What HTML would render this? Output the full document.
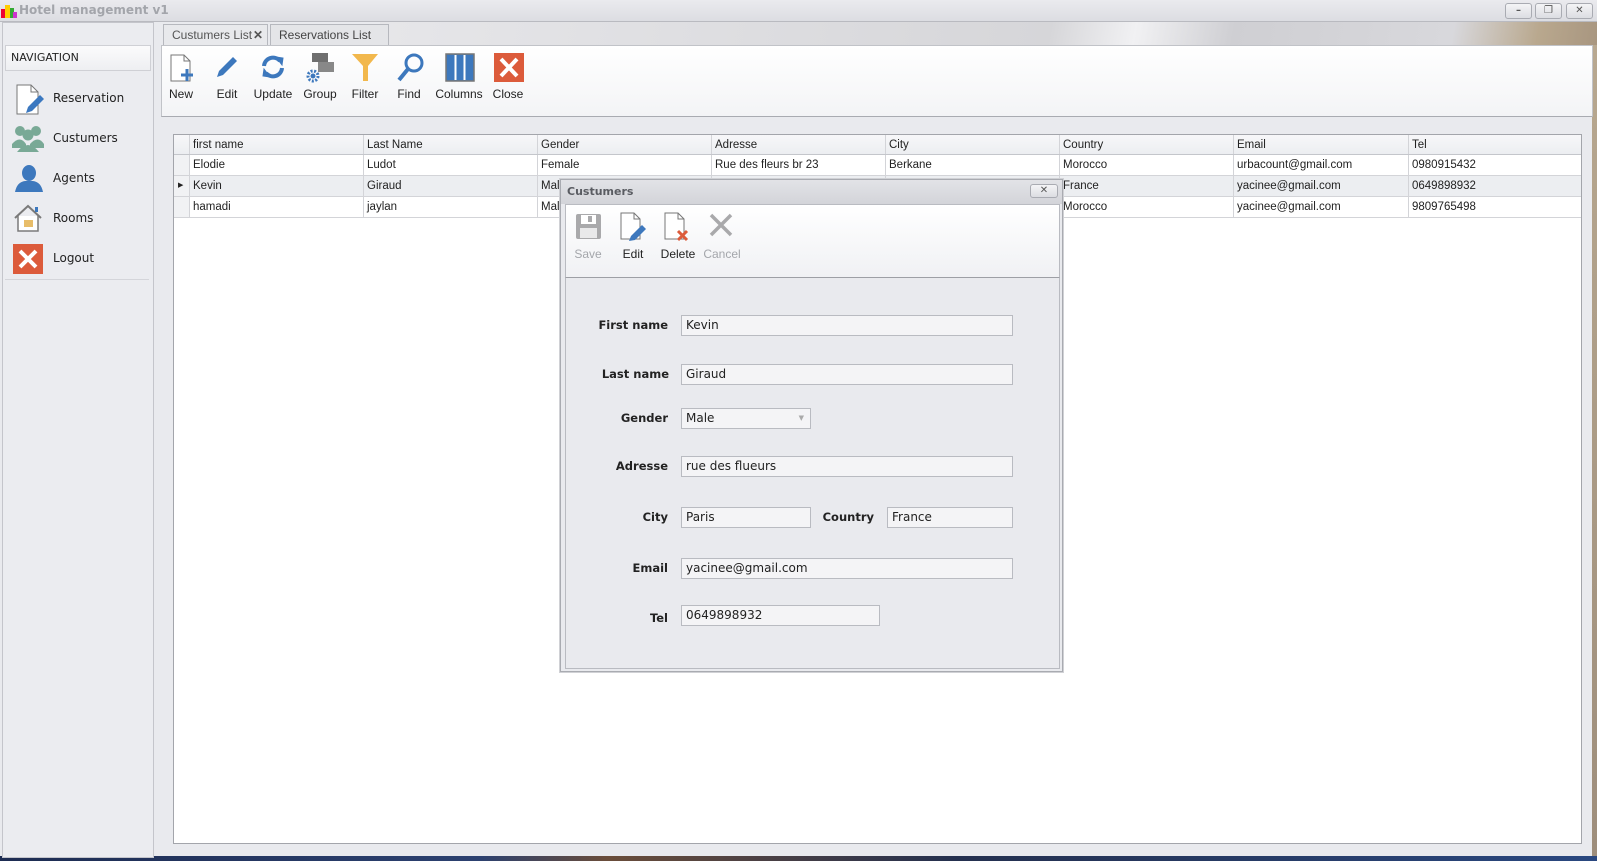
<!DOCTYPE html>
<html><head><meta charset="utf-8"><style>
*{box-sizing:border-box;margin:0;padding:0}
body{width:1597px;height:861px;overflow:hidden;background:#e9eaee;font-family:"DejaVu Sans","Liberation Sans",sans-serif;font-size:11px;color:#222;position:relative}
.abs{position:absolute}
#title{left:0;top:0;width:1597px;height:22px;background:linear-gradient(#eaeaee,#dcdde2);border-bottom:1px solid #b9bac0}
#title span{position:absolute;left:19px;top:3px;font-weight:bold;color:#a3a5ab;font-size:12px}
.wb{position:absolute;top:3px;width:27px;height:16px;border:1px solid #a9abb2;border-radius:3px;background:linear-gradient(#f4f4f6,#dcdde2);color:#555;font-size:10px;text-align:center;line-height:14px;font-weight:bold}
#strip{left:380px;top:22px;width:1217px;height:24px;background:linear-gradient(100deg,#e6e6e9 0%,#d6d6d9 55%,#f1f1f3 62%,#cfcfd3 70%,#d8d8dc 88%,#b9a88e 95%,#a89680 100%)}
#nav{left:2px;top:22px;width:152px;height:836px;background:#ebecf0;border:1px solid #c4c5cb}
#navh{left:5px;top:45px;width:146px;height:26px;background:linear-gradient(#fbfbfc,#eeeff2);border:1px solid #cfd0d5;font-size:11px;line-height:24px;padding-left:5px;color:#222}
.ni{position:absolute;left:53px;font-size:12px;color:#222}
.tab{position:absolute;top:24px;height:22px;border:1px solid #b6b8be;border-bottom:none;font-size:11px;line-height:20px;padding-left:8px;color:#555;font-family:"Liberation Sans",sans-serif;font-size:12px}
#tb{left:161px;top:45px;width:1432px;height:72px;background:linear-gradient(#fff,#f3f4f6);border:1px solid #c1c3c8;border-bottom-color:#a9abb1}
.btn{position:absolute;top:87px;font-size:11px;color:#222;text-align:center;width:60px;margin-left:-30px;font-family:"Liberation Sans",sans-serif;font-size:12px}
#grid{left:173px;top:134px;width:1409px;height:710px;background:#fff;border:1px solid #a3a5ab}
.row{position:absolute;left:0;width:1407px;height:21px;border-bottom:1px solid #d3d4d8}
.c{position:absolute;top:0;height:100%;border-left:1px solid #d3d4d8;padding-left:3px;line-height:20px;font-family:"Liberation Sans",sans-serif;font-size:11.5px;white-space:nowrap;overflow:hidden}
#dlg{left:560px;top:179px;width:503px;height:493px;background:#e9eaee;border:1px solid #a9abb1;box-shadow:0 0 0 1px #d0d1d5}
#dlgt{left:0;top:0;width:501px;height:24px;background:linear-gradient(#e2e3e7,#d3d4d9)}
#dlgtb{left:4px;top:24px;width:495px;height:74px;background:linear-gradient(#fff,#f0f1f4);border:1px solid #b9bbc1;border-bottom-color:#9d9fa5}
#dlgbody{left:4px;top:98px;width:495px;height:391px;border:1px solid #b9bbc1;border-top:none}
.lb{position:absolute;width:120px;text-align:right;font-weight:bold;font-size:11.5px;color:#222;line-height:21px}
.in{position:absolute;height:21px;background:#f4f4f6;border:1px solid #b9bbc1;padding-left:4px;line-height:19px;font-size:12px;color:#222}
</style></head><body>
<div id="title" class="abs">
<svg class="abs" style="left:1px;top:3px" width="16" height="15"><rect x="0" y="6" width="4" height="9" fill="#e03"/><rect x="4" y="2" width="5" height="13" fill="#fc0"/><rect x="9" y="5" width="4" height="10" fill="#3a3"/><rect x="12" y="9" width="4" height="6" fill="#c3c"/></svg>
<span>Hotel management v1</span>
<div class="wb" style="left:1505px">–</div><div class="wb" style="left:1535px">❐</div><div class="wb" style="left:1566px">✕</div>
</div>
<div id="strip" class="abs"></div>
<div class="abs" style="left:1592px;top:45px;width:5px;height:812px;background:linear-gradient(#b8a890,#9e8e7c)"></div>
<div class="abs" style="left:0;top:856px;width:1597px;height:5px;background:linear-gradient(90deg,#1d2c52,#2c4170 30%,#6a4d3a 38%,#24304f 60%,#2a4880)"></div>

<div id="nav" class="abs"></div>
<div id="navh" class="abs">NAVIGATION</div>
<svg class="abs" style="left:14px;top:84px" width="30" height="32"><path d="M3 1h14l7 7v22H3z" fill="#fff" stroke="#777"/><path d="M17 1v7h7" fill="none" stroke="#777"/><path d="M12 29l2-6 12-12 4 4-12 12z" fill="#3b78c0"/></svg>
<div class="ni" style="top:91px">Reservation</div>
<svg class="abs" style="left:12px;top:124px" width="32" height="28" fill="#79a996"><circle cx="8" cy="7" r="5"/><circle cx="24" cy="7" r="5"/><path d="M0 20q8-9 14 0v4H0z"/><path d="M18 20q8-9 14 0v4H18z"/><circle cx="16" cy="11" r="5.5"/><path d="M5 28q11-14 22 0z"/></svg>
<div class="ni" style="top:131px">Custumers</div>
<svg class="abs" style="left:15px;top:164px" width="28" height="28" fill="#3d78bd"><ellipse cx="14" cy="9" rx="7" ry="8"/><path d="M0 28q2-10 10-11h8q8 1 10 11z"/></svg>
<div class="ni" style="top:171px">Agents</div>
<svg class="abs" style="left:13px;top:204px" width="30" height="28"><path d="M2 14L15 2l13 12" fill="none" stroke="#7a7a7a" stroke-width="2"/><path d="M5 12v15h20V12" fill="#fff" stroke="#7a7a7a" stroke-width="1.5"/><rect x="11" y="16" width="9" height="7" fill="#e8bd69"/><rect x="22" y="3" width="3" height="5" fill="#3d78bd"/></svg>
<div class="ni" style="top:211px">Rooms</div>
<svg class="abs" style="left:13px;top:244px" width="30" height="30"><rect width="30" height="30" fill="#dc5b3b"/><path d="M7 7l16 16M23 7L7 23" stroke="#fff" stroke-width="4"/></svg>
<div class="ni" style="top:251px">Logout</div>
<div class="abs" style="left:5px;top:279px;width:144px;height:1px;background:#d4d5da"></div>

<div class="tab" style="left:163px;width:105px;background:#e8e9ec">Custumers List<span style="position:absolute;right:4px;top:0;color:#555;font-weight:bold">✕</span></div>
<div class="tab" style="left:270px;width:119px;background:#e4e5e8;color:#444">Reservations List</div>
<div id="tb" class="abs"></div>
<svg class="abs" style="left:170px;top:54px" width="24" height="28"><path d="M1 1h13l6 6v20H1z" fill="#fff" stroke="#777"/><path d="M14 1v6h6" fill="none" stroke="#777"/><path d="M11 21h12M17 15v12" stroke="#3d78bd" stroke-width="3"/></svg>
<div class="btn" style="left:181px">New</div>
<svg class="abs" style="left:215px;top:55px" width="24" height="24"><path d="M2 22l2-6L18 2l4 4L8 20z" fill="#3d78bd"/></svg>
<div class="btn" style="left:227px">Edit</div>
<svg class="abs" style="left:259px;top:54px" width="28" height="26" fill="none" stroke="#3d78bd" stroke-width="4"><path d="M5 12a9 9 0 0 1 16-5"/><path d="M23 14a9 9 0 0 1-16 5"/><path d="M17 3l7 1-1 7z" fill="#3d78bd" stroke-width="1"/><path d="M11 23l-7-1 1-7z" fill="#3d78bd" stroke-width="1"/></svg>
<div class="btn" style="left:273px">Update</div>
<svg class="abs" style="left:305px;top:53px" width="30" height="30"><rect x="7" y="0" width="16" height="9" fill="#6f6f6f"/><rect x="13" y="9" width="16" height="10" fill="#888"/><circle cx="8" cy="23" r="5" fill="none" stroke="#3d78bd" stroke-width="3" stroke-dasharray="2 1.5"/><circle cx="8" cy="23" r="2.5" fill="#3d78bd"/></svg>
<div class="btn" style="left:320px">Group</div>
<svg class="abs" style="left:352px;top:54px" width="26" height="28"><path d="M0 0h26L16 12v15h-5V12z" fill="#f2b84d"/></svg>
<div class="btn" style="left:365px">Filter</div>
<svg class="abs" style="left:397px;top:53px" width="28" height="30"><circle cx="17" cy="10" r="8" fill="none" stroke="#3d78bd" stroke-width="3"/><path d="M11 16L2 27" stroke="#3d78bd" stroke-width="4"/></svg>
<div class="btn" style="left:409px">Find</div>
<svg class="abs" style="left:445px;top:53px" width="30" height="29"><rect x="1" y="1" width="28" height="27" fill="#3d78bd" stroke="#777" stroke-width="1.5"/><path d="M10.5 2v25M19.5 2v25" stroke="#fff" stroke-width="2"/></svg>
<div class="btn" style="left:459px">Columns</div>
<svg class="abs" style="left:494px;top:53px" width="30" height="29"><rect width="30" height="29" fill="#dc5b3b"/><path d="M7 6l16 17M23 6L7 23" stroke="#fff" stroke-width="4"/></svg>
<div class="btn" style="left:508px">Close</div>

<div id="grid" class="abs">
<div class="row" style="top:0;height:20px;background:linear-gradient(#f7f7f9,#eceef1);border-bottom-color:#c4c6cb">
<div class="c" style="left:0;width:15px;border:none"></div>
<div class="c" style="left:15px;width:174px">first name</div><div class="c" style="left:189px;width:174px">Last Name</div><div class="c" style="left:363px;width:174px">Gender</div><div class="c" style="left:537px;width:174px">Adresse</div><div class="c" style="left:711px;width:174px">City</div><div class="c" style="left:885px;width:174px">Country</div><div class="c" style="left:1059px;width:175px">Email</div><div class="c" style="left:1234px;width:173px">Tel</div></div>
<div class="row" style="top:20px"><div class="c" style="left:0;width:15px;border:none;background:#f1f2f4"></div>
<div class="c" style="left:15px;width:174px">Elodie</div><div class="c" style="left:189px;width:174px">Ludot</div><div class="c" style="left:363px;width:174px">Female</div><div class="c" style="left:537px;width:174px">Rue des fleurs br 23</div><div class="c" style="left:711px;width:174px">Berkane</div><div class="c" style="left:885px;width:174px">Morocco</div><div class="c" style="left:1059px;width:175px">urbacount@gmail.com</div><div class="c" style="left:1234px;width:173px">0980915432</div></div>
<div class="row" style="top:41px;background:#eceef1"><div class="c" style="left:0;width:15px;border:none;background:#f1f2f4;font-size:7px;padding-left:4px">▶</div>
<div class="c" style="left:15px;width:174px">Kevin</div><div class="c" style="left:189px;width:174px">Giraud</div><div class="c" style="left:363px;width:174px">Male</div><div class="c" style="left:537px;width:174px"></div><div class="c" style="left:711px;width:174px"></div><div class="c" style="left:885px;width:174px">France</div><div class="c" style="left:1059px;width:175px">yacinee@gmail.com</div><div class="c" style="left:1234px;width:173px">0649898932</div></div>
<div class="row" style="top:62px"><div class="c" style="left:0;width:15px;border:none;background:#f1f2f4"></div>
<div class="c" style="left:15px;width:174px">hamadi</div><div class="c" style="left:189px;width:174px">jaylan</div><div class="c" style="left:363px;width:174px">Male</div><div class="c" style="left:537px;width:174px"></div><div class="c" style="left:711px;width:174px"></div><div class="c" style="left:885px;width:174px">Morocco</div><div class="c" style="left:1059px;width:175px">yacinee@gmail.com</div><div class="c" style="left:1234px;width:173px">9809765498</div></div>
</div>

<div id="dlg" class="abs">
<div id="dlgt" class="abs"><span style="position:absolute;left:6px;top:5px;font-weight:bold;color:#5a5c62;font-size:11px">Custumers</span>
<div class="wb" style="left:469px;top:4px;width:28px;height:14px;line-height:12px">✕</div></div>
<div id="dlgtb" class="abs">
<svg class="abs" style="left:9px;top:8px" width="28" height="28"><rect x="1" y="1" width="25" height="25" rx="2" fill="#a9a9ab"/><rect x="6" y="2" width="15" height="9" fill="#fff"/><rect x="13" y="3" width="4" height="6" fill="#a9a9ab"/><rect x="5" y="15" width="17" height="10" fill="#e9e9ea"/></svg>
<div class="btn" style="left:22px;top:42px;color:#a4a6ab">Save</div>
<svg class="abs" style="left:54px;top:7px" width="28" height="30"><path d="M1 1h13l6 6v20H1z" fill="#fff" stroke="#777"/><path d="M14 1v6h6" fill="none" stroke="#777"/><path d="M9 29l2-5 11-11 4 4-11 11z" fill="#3d78bd"/></svg>
<div class="btn" style="left:67px;top:42px">Edit</div>
<svg class="abs" style="left:98px;top:7px" width="28" height="30"><path d="M1 1h13l6 6v20H1z" fill="#fff" stroke="#777"/><path d="M14 1v6h6" fill="none" stroke="#777"/><path d="M14 19l9 9M23 19l-9 9" stroke="#dc5b3b" stroke-width="3"/></svg>
<div class="btn" style="left:112px;top:42px">Delete</div>
<svg class="abs" style="left:143px;top:8px" width="24" height="24"><path d="M2 2l20 20M22 2L2 22" stroke="#a9a9ab" stroke-width="3.5"/></svg>
<div class="btn" style="left:156px;top:42px;color:#a4a6ab">Cancel</div>
</div>
<div id="dlgbody" class="abs"></div>
<div class="lb" style="left:-13px;top:135px">First name</div><div class="in" style="left:120px;top:135px;width:332px">Kevin</div>
<div class="lb" style="left:-12px;top:184px">Last name</div><div class="in" style="left:120px;top:184px;width:332px">Giraud</div>
<div class="lb" style="left:-13px;top:228px">Gender</div><div class="in" style="left:120px;top:228px;width:130px">Male<span style="position:absolute;right:6px;top:0;color:#aaa;font-size:7px">▼</span></div>
<div class="lb" style="left:-13px;top:276px">Adresse</div><div class="in" style="left:120px;top:276px;width:332px">rue des flueurs</div>
<div class="lb" style="left:-13px;top:327px">City</div><div class="in" style="left:120px;top:327px;width:130px">Paris</div>
<div class="lb" style="left:193px;top:327px">Country</div><div class="in" style="left:326px;top:327px;width:126px">France</div>
<div class="lb" style="left:-13px;top:378px">Email</div><div class="in" style="left:120px;top:378px;width:332px">yacinee@gmail.com</div>
<div class="lb" style="left:-13px;top:428px">Tel</div><div class="in" style="left:120px;top:425px;width:199px">0649898932</div>
</div>
</body></html>
